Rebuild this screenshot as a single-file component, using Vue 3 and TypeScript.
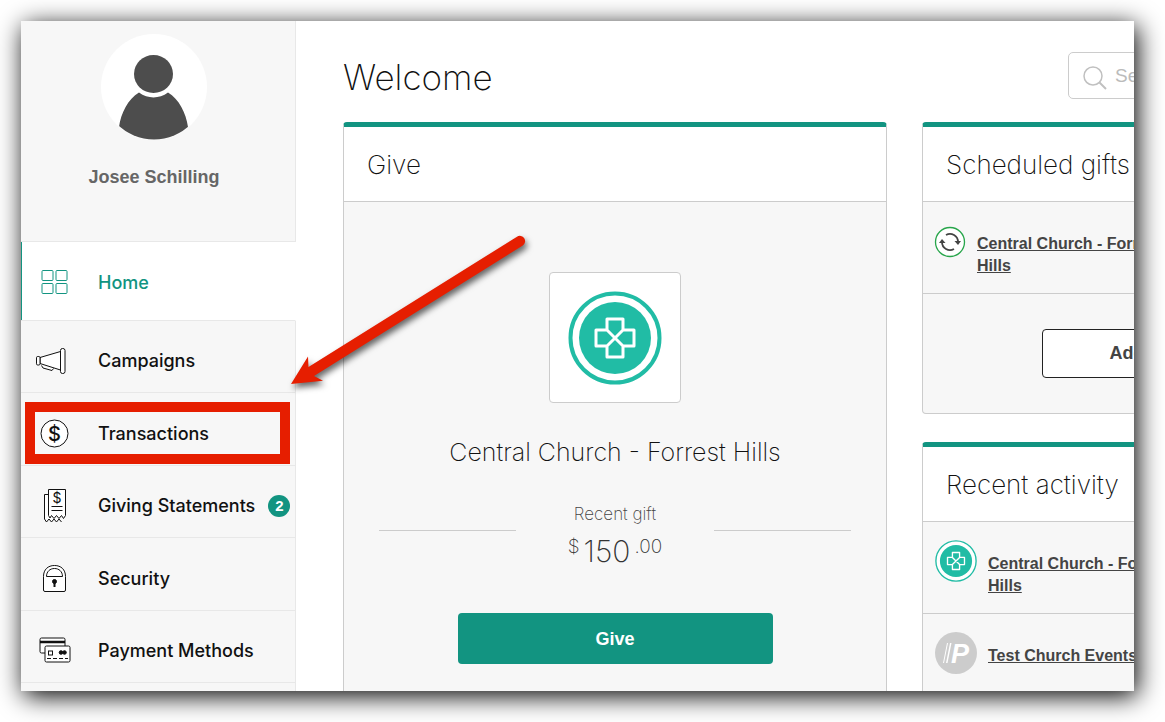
<script setup lang="ts">
import { h, type FunctionalComponent } from 'vue'

interface NavItem {
  label: string
  icon: 'home' | 'campaigns' | 'transactions' | 'statements' | 'security' | 'payment'
  active?: boolean
  highlighted?: boolean
  badge?: number
}

const navItems: NavItem[] = [
  { label: 'Home', icon: 'home', active: true },
  { label: 'Campaigns', icon: 'campaigns' },
  { label: 'Transactions', icon: 'transactions', highlighted: true },
  { label: 'Giving Statements', icon: 'statements', badge: 2 },
  { label: 'Security', icon: 'security' },
  { label: 'Payment Methods', icon: 'payment' },
]

const ChurchLogo: FunctionalComponent<{ ring: number }> = (props) =>
  h('svg', { viewBox: '0 0 94 94', 'aria-hidden': 'true' }, [
    h('circle', { cx: 47, cy: 47, r: 46.5 - props.ring / 2, fill: '#fff', stroke: '#21bca5', 'stroke-width': props.ring }),
    h('circle', { cx: 47, cy: 47, r: 36, fill: '#21bca5' }),
    h('path', {
      d: 'M39 28h16v11h11v16h-11v11h-16v-11h-11v-16h11zM39 39l16 16M55 39l-16 16',
      fill: 'none',
      stroke: '#fff',
      'stroke-width': 3,
      'stroke-linejoin': 'round',
    }),
  ])
</script>

<template>
  <div class="page">
    <div class="window">
      <aside class="sidebar">
        <div class="profile">
          <svg class="avatar" viewBox="0 0 106 106" aria-hidden="true">
            <defs>
              <clipPath id="avatar-clip"><circle cx="53" cy="53" r="52.500" /></clipPath>
            </defs>
            <circle cx="53" cy="53" r="53" fill="#fff" />
            <path
              clip-path="url(#avatar-clip)"
              fill="#4d4d4d"
              d="M18 93C20 79 27 65 38 58.500C47 65 58 65 67 58.500C78 65 85 79 87 93L86 106H18Z"
            />
            <ellipse cx="52.500" cy="40" rx="19.500" ry="19" fill="#4d4d4d" />
          </svg>
          <div class="user">Josee Schilling</div>
        </div>
        <nav>
          <a v-for="item in navItems" :key="item.label" href="#" class="nav-item" :class="{ active: item.active }">
            <svg v-if="item.icon === 'home'" class="icon" viewBox="0 0 32 32" fill="#fff" stroke="#129481">
              <rect x="3" y="3.500" width="11" height="10" rx="1" /><rect x="17" y="3.500" width="11" height="10" rx="1" />
              <rect x="3" y="16.500" width="11" height="10" rx="1" /><rect x="17" y="16.500" width="11" height="10" rx="1" />
            </svg>
            <svg v-else-if="item.icon === 'campaigns'" class="icon" viewBox="0 0 32 32" fill="#fff" stroke="#111">
              <path d="M2.500 20.500l1.500 2.500 9 2.500 1.500-2" />
              <path d="M1 12.500L21.500 6.500V25L1 18.500Z" />
              <rect x="-2.500" y="11.500" width="3.500" height="8.500" rx="1.200" />
              <rect x="21.500" y="3.500" width="4.500" height="25" rx="2" />
            </svg>
            <svg v-else-if="item.icon === 'transactions'" class="icon" viewBox="0 0 32 32" fill="#fff" stroke="#111">
              <circle cx="15.500" cy="15.500" r="13.500" />
              <text x="15.500" y="22.500" class="dollar">$</text>
            </svg>
            <svg v-else-if="item.icon === 'statements'" class="icon tall" viewBox="0 0 32 36" fill="#fff" stroke="#111">
              <path d="M9.500 6.500H5.500V31l2 3 2.500-3 2.500 3 2.500-3 2.500 3 2.500-3 2.500 3" />
              <path d="M9.500 1.500H26.500V27.500l-2 3-2-3-2.500 3-2.500-3-2.500 3-2.500-3-1.500 2.500-1.500-2.500z" />
              <path d="M12.500 18.500h11M12.500 22.500h11" stroke-width="1" />
              <text x="18" y="15" class="dollar small">$</text>
            </svg>
            <svg v-else-if="item.icon === 'security'" class="icon" viewBox="0 0 32 32" fill="#fff" stroke="#111">
              <path d="M4.500 13.500C4.500 6.500 9 2.500 15.500 2.500S26.500 6.500 26.500 13.500V27a1.500 1.500 0 0 1-1.500 1.500H6A1.500 1.500 0 0 1 4.500 27Z" />
              <path d="M7.500 13.500C7.500 8.500 11 5.500 15.500 5.500S23.500 8.500 23.500 13.500Z" />
              <circle cx="15.500" cy="18.500" r="2" fill="#111" /><path d="M15.500 19v5" stroke-width="2" />
            </svg>
            <svg v-else class="icon" viewBox="0 0 32 32" fill="#fff" stroke="#111">
              <rect x="1" y="3" width="25" height="15" rx="1.500" />
              <path d="M1 7h25" stroke-width="2.500" />
              <rect x="6" y="11" width="25" height="16" rx="1.500" />
              <rect x="9.500" y="16" width="4" height="4" />
              <circle cx="22" cy="17.500" r="1.800" fill="#111" /><circle cx="25.500" cy="17.500" r="1.800" fill="#111" />
              <path d="M8 23.500h21" stroke-dasharray="4 2" />
            </svg>
            <span class="nav-label">{{ item.label }}</span>
            <span v-if="item.badge" class="badge">{{ item.badge }}</span>
            <span v-if="item.highlighted" class="highlight"></span>
          </a>
          <div class="nav-rest"></div>
        </nav>
      </aside>

      <main class="main">
        <div class="content">
          <header class="topbar">
            <h1>Welcome</h1>
            <label class="search">
              <svg viewBox="0 0 24 24" fill="none" stroke="#c0c0c0" stroke-width="1.500" aria-hidden="true">
                <circle cx="10" cy="10" r="9" /><path d="M16.500 16.500l6.500 6.500" stroke-width="2" />
              </svg>
              <input type="text" placeholder="Search" aria-label="Search" />
            </label>
          </header>
          <div class="columns">
            <section class="card">
              <h2>Give</h2>
              <div class="give-body">
                <div class="logo-box"><ChurchLogo class="logo" :ring="4" /></div>
                <h3>Central Church - Forrest Hills</h3>
                <div class="recent">
                  <hr />
                  <div class="gift">
                    <div class="gift-label">Recent gift</div>
                    <div class="amount"><span class="unit">$</span><span>150</span><span class="unit">.00</span></div>
                  </div>
                  <hr />
                </div>
                <button type="button" class="give-button">Give</button>
              </div>
            </section>

            <div class="side">
              <section class="card">
                <h2>Scheduled gifts</h2>
                <div class="row">
                  <svg class="repeat" viewBox="0 0 32 32" fill="none" aria-hidden="true">
                    <circle cx="16" cy="16" r="14.500" fill="#fff" stroke="#27a54a" stroke-width="1.300" />
                    <g stroke="#444" stroke-width="1.800">
                      <path d="M12 9A8 8 0 0 1 24 16" /><path d="M20 23A8 8 0 0 1 8 16" />
                    </g>
                    <path d="M20.500 15h6.500l-3 4zM5 17h6.500l-3.500-4z" fill="#444" />
                  </svg>
                  <a href="#">Central Church - Forrest Hills</a>
                </div>
                <div class="card-foot"><button type="button" class="add-button">Add</button></div>
              </section>
              <section class="card">
                <h2>Recent activity</h2>
                <div class="row wide-row">
                  <ChurchLogo class="thumb" :ring="3" />
                  <a href="#">Central Church - Forrest Hills</a>
                </div>
                <div class="row wide-row">
                  <svg class="thumb" viewBox="0 0 42 42" aria-hidden="true">
                    <circle cx="21" cy="21" r="21" fill="#ccc" />
                    <path d="M12 11h1l-4 20h-1zM15 11h1.500l-4 20h-1.500z" fill="#fff" />
                    <text x="25" y="31" class="mark">P</text>
                  </svg>
                  <a href="#">Test Church Events</a>
                </div>
              </section>
            </div>
          </div>
        </div>
      </main>
    </div>

    <svg class="arrow" viewBox="0 0 240 156" aria-hidden="true">
      <path
        fill="#e61e00"
        d="M1 149L18 121.500L18.500 132L227 1.700A5.200 5.200 0 0 1 232.800 10.400L24 141L33 145.700Z"
      />
    </svg>
  </div>
</template>

<style>
body {
  margin: 0;
  background: #fff;
}
</style>

<style scoped>
* {
  box-sizing: border-box;
}
.page {
  position: relative;
  height: 100vh;
  padding: 21px 31px 31px 21px;
  overflow: hidden;
  font-family: 'Liberation Sans', Arial, sans-serif;
  color: #111;
}
.window {
  display: flex;
  height: 100%;
  overflow: hidden;
  background: #fff;
  box-shadow: 3px 5px 24px #000;
}
.sidebar {
  display: flex;
  flex: 0 0 275px;
  flex-direction: column;
}
.profile {
  display: flex;
  flex: 0 0 221px;
  flex-direction: column;
  align-items: center;
  padding: 13px 8px 0 0;
  background: #f7f7f7;
  border-right: 1px solid #e8e8e8;
  border-bottom: 1px solid #e8e8e8;
}
.avatar {
  width: 106px;
  height: 106px;
}
.user {
  margin-top: 26px;
  font-size: 18px;
  font-weight: 700;
  line-height: 22px;
  color: #666;
}
nav {
  display: flex;
  flex: 1;
  flex-direction: column;
}
.nav-item {
  position: relative;
  display: flex;
  flex: 0 0 73px;
  align-items: center;
  padding: 9px 0 0 18px;
  background: #f7f7f7;
  border-right: 1px solid #e8e8e8;
  border-bottom: 1px solid #e8e8e8;
  color: #111;
  text-decoration: none;
}
.nav-item:nth-child(even) {
  flex-basis: 72px;
}
.nav-item.active {
  flex-basis: 79px;
  padding-top: 3px;
  background: #fff;
  border-right-color: #fff;
  box-shadow: inset 1px 0 #129481;
  color: #129481;
}
.nav-rest {
  flex: 1;
  background: #f7f7f7;
  border-right: 1px solid #e8e8e8;
}
.icon {
  flex: none;
  width: 32px;
  height: 32px;
  margin-right: 27px;
  overflow: visible;
}
.icon.tall {
  height: 36px;
}
.nav-label {
  font-family: Inter, 'Liberation Sans', sans-serif;
  font-size: 18px;
  font-weight: 500;
  line-height: 24px;
  white-space: nowrap;
}
.dollar {
  fill: #111;
  stroke: none;
  font-family: Inter, 'Liberation Sans', sans-serif;
  font-size: 20px;
  font-weight: 500;
  text-anchor: middle;
}
.dollar.small {
  font-size: 14px;
  font-weight: 400;
}
.badge {
  width: 22px;
  height: 22px;
  margin-left: 13px;
  border-radius: 50%;
  background: #129481;
  color: #fff;
  font-size: 15px;
  font-weight: 700;
  line-height: 22px;
  text-align: center;
}
.highlight {
  position: absolute;
  inset: 9px 5px 1px 4px;
  border: 10px solid #e61e00;
}
.main {
  flex: 1;
  min-width: 0;
  overflow: hidden;
}
.content {
  width: calc(100% + 198px);
  padding: 31px 0 0 47px;
}
.topbar {
  display: flex;
  align-items: center;
  justify-content: space-between;
  margin-bottom: 23px;
}
h1,
h2,
h3 {
  margin: 0;
  font-family: Inter, Roboto, sans-serif;
  font-weight: 200;
}
h1 {
  padding-top: 3px;
  font-size: 35px;
  line-height: 44px;
}
.search {
  display: flex;
  align-items: center;
  width: 264px;
  height: 47px;
  padding: 4px 14px 0;
  border: 1px solid #ccc;
  border-radius: 5px;
}
.search svg {
  flex: none;
  width: 24px;
  height: 24px;
  margin-right: 8px;
}
.search input {
  width: 100%;
  min-width: 0;
  padding: 0 0 4px;
  border: 0;
  outline: 0;
  background: none;
  font: 19px 'Liberation Sans', Arial, sans-serif;
}
.search input::placeholder {
  color: #bbb;
}
.columns {
  display: grid;
  grid-template-columns: minmax(0, 1fr) 410px;
  gap: 35px;
}
.side {
  display: flex;
  flex-direction: column;
  gap: 28px;
}
.card {
  border: 1px solid #ccc;
  border-top: 5px solid #129481;
  border-radius: 4px;
  background: #f7f7f7;
}
h2 {
  padding: 19px 23px 18px;
  border-bottom: 1px solid #ccc;
  background: #fff;
  font-size: 26px;
  line-height: 37px;
}
.give-body {
  display: flex;
  flex-direction: column;
  align-items: center;
  padding: 70px 35px 60px;
}
.logo-box {
  display: grid;
  place-items: center;
  width: 132px;
  height: 131px;
  border: 1px solid #ccc;
  border-radius: 4px;
  background: #fff;
}
.logo {
  width: 94px;
  height: 94px;
}
h3 {
  margin-top: 31px;
  font-size: 25px;
  line-height: 36px;
}
.recent {
  display: flex;
  align-items: center;
  width: 100%;
  margin-top: 32px;
}
.recent hr {
  flex: 1;
  height: 1px;
  margin: 0 0 18px;
  border: 0;
  background: #ccc;
}
.gift {
  flex: 0 0 198px;
  font-family: Inter, Roboto, sans-serif;
  font-weight: 200;
  text-align: center;
}
.gift-label {
  font-size: 17px;
  line-height: 24px;
  color: #444;
}
.amount {
  display: flex;
  justify-content: center;
  gap: 4px;
  font-size: 30px;
  line-height: 50px;
  color: #333;
}
.unit {
  font-size: 19px;
  line-height: 42px;
}
.give-button {
  width: 315px;
  height: 51px;
  margin-top: 37px;
  padding: 2px 0 0;
  border: 0;
  border-radius: 4px;
  background: #129481;
  color: #fff;
  font: 700 18px 'Liberation Sans', Arial, sans-serif;
}
.row {
  display: flex;
  gap: 11px;
  min-height: 92px;
  padding: 24px 140px 0 11px;
  border-bottom: 1px solid #ccc;
}
.row a {
  padding-top: 7px;
  color: #444;
  font-size: 16px;
  font-weight: 700;
  line-height: 22px;
}
.repeat {
  flex: none;
  width: 32px;
  height: 32px;
}
.wide-row {
  padding: 18px 128px 0 12px;
}
.wide-row a {
  padding-top: 13px;
}
.thumb {
  flex: none;
  width: 42px;
  height: 42px;
}
.mark {
  fill: #fff;
  font-size: 27px;
  font-style: italic;
  font-weight: 700;
  text-anchor: middle;
}
.card-foot {
  display: flex;
  justify-content: center;
  padding: 35px 0;
}
.add-button {
  width: 170px;
  height: 49px;
  border: 1px solid #222;
  border-radius: 4px;
  background: #fff;
  color: #444;
  font: 700 18px 'Liberation Sans', Arial, sans-serif;
}
.arrow {
  position: absolute;
  top: 235px;
  left: 290px;
  width: 240px;
  height: 156px;
  overflow: visible;
  filter: drop-shadow(2px 4px 3px rgba(0, 0, 0, 0.6));
}
</style>
